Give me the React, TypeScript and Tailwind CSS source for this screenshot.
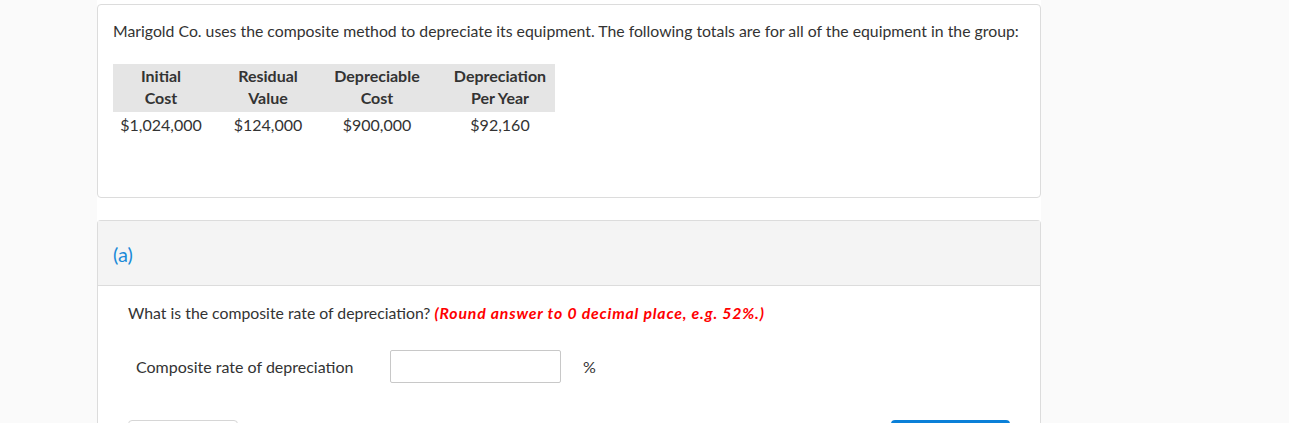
export default function App() {
  const cols = [
    { head: ["Initial", "Cost"], value: "$1,024,000", w: "w-[96px]" },
    { head: ["Residual", "Value"], value: "$124,000", w: "w-[118px]" },
    { head: ["Depreciable", "Cost"], value: "$900,000", w: "w-[100px]" },
    { head: ["Depreciation", "Per Year"], value: "$92,160", w: "w-[128px] pl-[18px]" },
  ];

  return (
    <div
      className="min-h-[423px] w-full bg-[#fafafa] text-[#333] overflow-hidden"
      style={{ fontFamily: "Lato, 'Open Sans', sans-serif" }}
    >
      <div className="ml-[97px] w-[944px] bg-white pt-[4px] h-[423px]">
        {/* problem statement */}
        <div className="h-[194px] rounded-[4px] border border-[#dcdcdc] px-[15px] pt-[15px]">
          <p className="text-[15.8px] leading-[22px] whitespace-nowrap">
            Marigold Co. uses the composite method to depreciate its equipment. The following totals are for all of the equipment in the group:
          </p>
          <div className="mt-[22px] w-[442px]">
            <div className="flex bg-[#e5e5e5] pt-[1px] pb-[3px]">
              {cols.map((c) => (
                <div key={c.value} className={`${c.w} shrink-0 text-center text-[16px] leading-[22px] font-bold`}>
                  <div>{c.head[0]}</div>
                  <div>{c.head[1]}</div>
                </div>
              ))}
            </div>
            <div className="flex pt-[2px]">
              {cols.map((c) => (
                <div key={c.value} className={`${c.w} shrink-0 text-center text-[16px] leading-[22px]`}>
                  {c.value}
                </div>
              ))}
            </div>
          </div>
        </div>

        {/* part (a) */}
        <div className="mt-[22px] rounded-t-[4px] border border-b-0 border-[#dcdcdc] h-[210px]">
          <div className="h-[65px] bg-[#f4f4f4] border-b border-[#dcdcdc] px-[15px] flex items-center">
            <span className="text-[20px] text-[#1a8ad8] leading-none pt-[1px]">(a)</span>
          </div>
          <div className="pl-[30px] pr-[30px] pt-[16px]">
            <p className="text-[15.8px] leading-[22px] whitespace-nowrap">
              What is the composite rate of depreciation?{" "}
              <span className="font-bold italic text-[#f00] tracking-[0.82px]">(Round answer to 0 decimal place, e.g. 52%.)</span>
            </p>
            <div className="mt-[26px] flex items-center pl-[8px]">
              <span className="w-[254px] text-[16px]">Composite rate of depreciation</span>
              <input
                type="text"
                className="h-[33px] w-[171px] rounded-[2px] border border-[#c8c8c8] bg-white outline-none"
              />
              <span className="ml-[22px] text-[16px]">%</span>
            </div>
            <div className="mt-[37px] flex justify-between">
              <button className="h-[34px] w-[110px] rounded-[4px] border border-[#d6d6d6] bg-white"></button>
              <button className="h-[34px] w-[119px] rounded-[4px] bg-[#0a80d8]"></button>
            </div>
          </div>
        </div>
      </div>
    </div>
  );
}
